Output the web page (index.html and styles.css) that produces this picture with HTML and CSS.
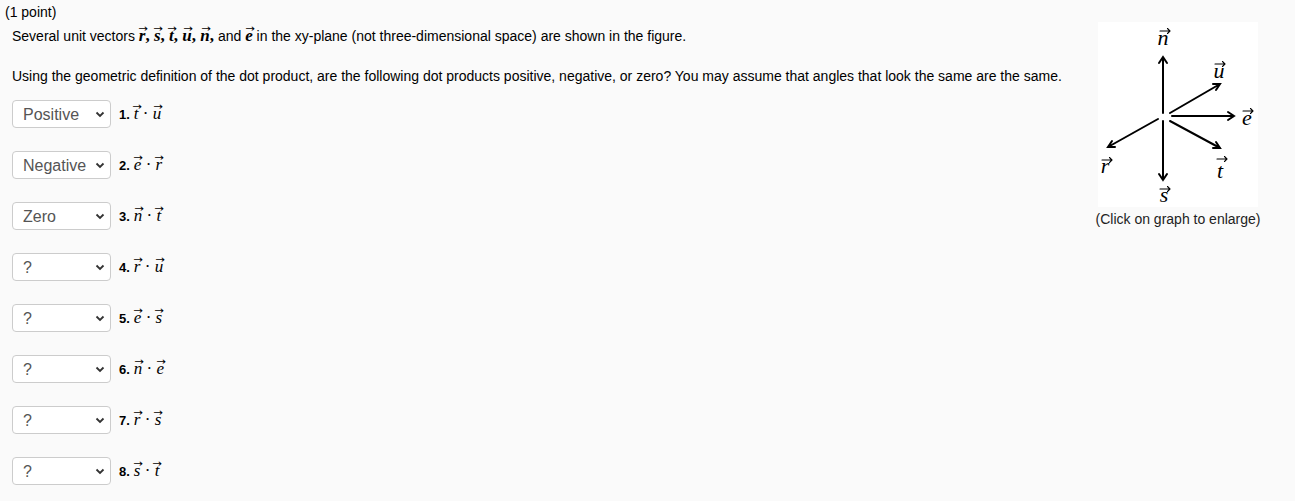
FILE: index.html
```html
<!DOCTYPE html>
<html lang="en">
<head>
<meta charset="utf-8">
<title>Dot products</title>
<link rel="stylesheet" href="styles.css">
</head>
<body>
<div class="page">
  <div class="points">(1 point)</div>
  <div class="problem">
    <div class="main">
      <p class="intro">Several unit vectors <span class="m"><span class="vec">r</span>, <span class="vec">s</span>, <span class="vec">t</span>, <span class="vec">u</span>, <span class="vec">n</span>,</span> and <span class="m"><span class="vec">e</span></span> in the xy-plane (not three-dimensional space) are shown in the figure.</p>
      <p class="intro2">Using the geometric definition of the dot product, are the following dot products positive, negative, or zero? You may assume that angles that look the same are the same.</p>
      <div class="questions">
        <div class="q"><span class="sel"><select><option>Positive</option><option>?</option><option>Negative</option><option>Zero</option></select><svg class="chev" width="10" height="7" viewBox="0 0 10 7"><path d="M1.5 1.5 L5 5 L8.5 1.5" fill="none" stroke="#333" stroke-width="1.8"/></svg></span><b>1.</b> <span class="m"><span class="vec">t</span> · <span class="vec">u</span></span></div>
        <div class="q"><span class="sel"><select><option>Negative</option><option>?</option><option>Positive</option><option>Zero</option></select><svg class="chev" width="10" height="7" viewBox="0 0 10 7"><path d="M1.5 1.5 L5 5 L8.5 1.5" fill="none" stroke="#333" stroke-width="1.8"/></svg></span><b>2.</b> <span class="m"><span class="vec">e</span> · <span class="vec">r</span></span></div>
        <div class="q"><span class="sel"><select><option>Zero</option><option>?</option><option>Positive</option><option>Negative</option></select><svg class="chev" width="10" height="7" viewBox="0 0 10 7"><path d="M1.5 1.5 L5 5 L8.5 1.5" fill="none" stroke="#333" stroke-width="1.8"/></svg></span><b>3.</b> <span class="m"><span class="vec">n</span> · <span class="vec">t</span></span></div>
        <div class="q"><span class="sel"><select><option>?</option><option>Positive</option><option>Negative</option><option>Zero</option></select><svg class="chev" width="10" height="7" viewBox="0 0 10 7"><path d="M1.5 1.5 L5 5 L8.5 1.5" fill="none" stroke="#333" stroke-width="1.8"/></svg></span><b>4.</b> <span class="m"><span class="vec">r</span> · <span class="vec">u</span></span></div>
        <div class="q"><span class="sel"><select><option>?</option><option>Positive</option><option>Negative</option><option>Zero</option></select><svg class="chev" width="10" height="7" viewBox="0 0 10 7"><path d="M1.5 1.5 L5 5 L8.5 1.5" fill="none" stroke="#333" stroke-width="1.8"/></svg></span><b>5.</b> <span class="m"><span class="vec">e</span> · <span class="vec">s</span></span></div>
        <div class="q"><span class="sel"><select><option>?</option><option>Positive</option><option>Negative</option><option>Zero</option></select><svg class="chev" width="10" height="7" viewBox="0 0 10 7"><path d="M1.5 1.5 L5 5 L8.5 1.5" fill="none" stroke="#333" stroke-width="1.8"/></svg></span><b>6.</b> <span class="m"><span class="vec">n</span> · <span class="vec">e</span></span></div>
        <div class="q"><span class="sel"><select><option>?</option><option>Positive</option><option>Negative</option><option>Zero</option></select><svg class="chev" width="10" height="7" viewBox="0 0 10 7"><path d="M1.5 1.5 L5 5 L8.5 1.5" fill="none" stroke="#333" stroke-width="1.8"/></svg></span><b>7.</b> <span class="m"><span class="vec">r</span> · <span class="vec">s</span></span></div>
        <div class="q"><span class="sel"><select><option>?</option><option>Positive</option><option>Negative</option><option>Zero</option></select><svg class="chev" width="10" height="7" viewBox="0 0 10 7"><path d="M1.5 1.5 L5 5 L8.5 1.5" fill="none" stroke="#333" stroke-width="1.8"/></svg></span><b>8.</b> <span class="m"><span class="vec">s</span> · <span class="vec">t</span></span></div>
      </div>
    </div>
    <figure class="fig">
      <svg class="graph" width="160" height="185" viewBox="0 0 160 185">
        <rect width="160" height="185" fill="#fff"/>
        <g fill="none" stroke="#000" stroke-width="2" stroke-linecap="round">
          <path d="M65 91 L65 35 M61 41 L65 35 L69 41"/>
          <path d="M65 99 L65 158 M61 152 L65 158 L69 152"/>
          <path d="M72 91 L122 62 M115 62 L122 62 L118 68"/>
          <path d="M74 94 L136 94 M130 90 L136 94 L130 98"/>
          <path d="M72 99 L122 126 M118 120 L122 126 L115 126"/>
          <path d="M60 97 L10 125 M17 125 L10 125 L14 119"/>
        </g>
        <g class="lbl" text-anchor="middle" fill="#000">
          <text x="65" y="23">n</text>
          <text x="121" y="56">u</text>
          <text x="149" y="103">e</text>
          <text x="122" y="156">t</text>
          <text x="7" y="151">r</text>
          <text x="66" y="180">s</text>
        </g>
        <g fill="none" stroke="#000" stroke-width="1.1" stroke-linecap="round">
          <path d="M62 9 L72 9 M69.5 6.5 L72 9 L69.5 11.5"/>
          <path d="M117 42 L127 42 M124.5 39.5 L127 42 L124.5 44.5"/>
          <path d="M145 89 L155 89 M152.5 86.5 L155 89 L152.5 91.5"/>
          <path d="M119 137 L129 137 M126.5 134.5 L129 137 L126.5 139.5"/>
          <path d="M4 138 L14 138 M11.5 135.5 L14 138 L11.5 140.5"/>
          <path d="M62 167 L72 167 M69.5 164.5 L72 167 L69.5 169.5"/>
        </g>
      </svg>
      <figcaption class="cap">(Click on graph to enlarge)</figcaption>
    </figure>
  </div>
</div>
</body>
</html>
```

FILE: styles.css
```css
html, body {
  margin: 0;
  padding: 0;
  background: #fafafa;
}
body {
  font-family: "Liberation Sans", Arial, sans-serif;
  font-size: 14px;
  color: #000;
}
.page {
  padding: 4px 0 0 5px;
}
.points {
  line-height: 16px;
}
.problem {
  display: flex;
  align-items: flex-start;
}
.main {
  flex: 1;
  padding-left: 7px;
}
.intro {
  margin: 6px 0 0;
  line-height: 20px;
}
.intro2 {
  margin: 20px 0 0;
  line-height: 20px;
}
.m {
  font-family: "Liberation Serif", "Times New Roman", "DejaVu Serif", serif;
  font-size: 17px;
  font-weight: bold;
}
.q .m {
  font-weight: normal;
}
.vec {
  position: relative;
  display: inline-block;
  font-style: italic;
}
.vec::after {
  content: "\2192";
  position: absolute;
  font-family: "DejaVu Sans", sans-serif;
  font-style: normal;
  font-weight: normal;
  font-size: 10px;
  line-height: 10px;
  left: 58%;
  top: -2px;
  transform: translateX(-50%) scaleX(1.15);
}
.lbl {
  font-family: "Liberation Serif", "Times New Roman", "DejaVu Serif", serif;
  font-style: italic;
  font-size: 22px;
}
.questions {
  margin-top: 14px;
  display: flex;
  flex-direction: column;
  gap: 23px;
}
.q {
  display: flex;
  align-items: center;
  gap: 4px;
  height: 28px;
}
.q b {
  font-size: 13px;
  margin-left: 4px;
}
.sel {
  position: relative;
  display: inline-block;
  width: 99px;
  height: 28px;
}
.sel select {
  appearance: none;
  -webkit-appearance: none;
  width: 99px;
  height: 28px;
  box-sizing: border-box;
  border: 1px solid #cccccc;
  border-radius: 4px;
  background: #fff;
  color: #555;
  font-family: "Liberation Sans", Arial, sans-serif;
  font-size: 16px;
  padding: 0 0 0 10px;
  margin: 0;
}
.chev {
  position: absolute;
  right: 6px;
  top: 11px;
  pointer-events: none;
}
.fig {
  margin: 2px 35px 0 20px;
  width: 164px;
  display: flex;
  flex-direction: column;
  align-items: center;
}
.graph {
  display: block;
}
.cap {
  margin-top: 4px;
  font-size: 14px;
  line-height: 16px;
  color: #222;
  white-space: nowrap;
}
```
